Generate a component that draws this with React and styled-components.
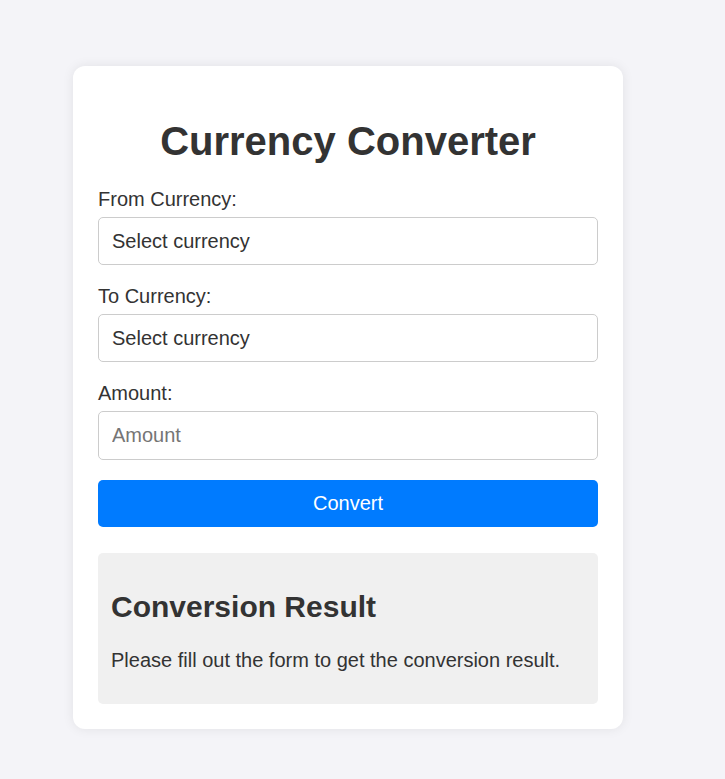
import styled, { createGlobalStyle } from "styled-components";

const GlobalStyle = createGlobalStyle`
  html, body {
    margin: 0;
    padding: 0;
    background: #f4f4f8;
  }
  body {
    font-family: "Liberation Sans", Arial, sans-serif;
    color: #333;
  }
`;

const Page = styled.div`
  min-height: 779px;
  padding: 66px 0 0 73px;
  box-sizing: border-box;
`;

const Card = styled.div`
  width: 550px;
  box-sizing: border-box;
  background: #fff;
  border-radius: 12px;
  padding: 25px;
  box-shadow: 0 0 12px rgba(0, 0, 0, 0.08);
`;

const Title = styled.h1`
  font-size: 40px;
  font-weight: bold;
  text-align: center;
  margin: 27px 0 24px;
  line-height: 46px;
  color: #333;
`;

const Field = styled.div`
  display: flex;
  flex-direction: column;
  gap: 6px;
  margin-bottom: ${(p) => (p.$last ? "0" : "20px")};
`;

const Label = styled.label`
  font-size: 20px;
  line-height: 23px;
  color: #333;
`;

const Select = styled.select`
  appearance: none;
  height: 48px;
  border: 1px solid #ccc;
  border-radius: 5px;
  padding: 0 13px;
  font-family: inherit;
  font-size: 20px;
  color: #333;
  background: #fff;
  outline: none;
`;

const Input = styled.input`
  height: 49px;
  box-sizing: border-box;
  border: 1px solid #ccc;
  border-radius: 5px;
  padding: 0 13px;
  font-family: inherit;
  font-size: 20px;
  color: #333;
  outline: none;

  &::placeholder {
    color: #757575;
  }
`;

const Button = styled.button`
  display: block;
  width: 100%;
  height: 47px;
  margin-top: 20px;
  border: none;
  border-radius: 5px;
  background: #007bff;
  color: #fff;
  font-family: inherit;
  font-size: 20px;
  cursor: pointer;
`;

const Result = styled.div`
  margin-top: 26px;
  background: #f0f0f0;
  border-radius: 5px;
  padding: 12px 13px;
  min-height: 151px;
  box-sizing: border-box;

  h2 {
    font-size: 30px;
    line-height: 34px;
    margin: 25px 0 25px;
    color: #333;
  }

  p {
    font-size: 20px;
    line-height: 23px;
    margin: 0 0 17px;
    color: #333;
  }
`;

function App() {
  return (
    <>
      <GlobalStyle />
      <Page>
        <Card>
          <Title>Currency Converter</Title>
          <Field>
            <Label htmlFor="from">From Currency:</Label>
            <Select id="from" defaultValue="">
              <option value="">Select currency</option>
            </Select>
          </Field>
          <Field>
            <Label htmlFor="to">To Currency:</Label>
            <Select id="to" defaultValue="">
              <option value="">Select currency</option>
            </Select>
          </Field>
          <Field $last>
            <Label htmlFor="amount">Amount:</Label>
            <Input id="amount" type="number" placeholder="Amount" />
          </Field>
          <Button>Convert</Button>
          <Result>
            <h2>Conversion Result</h2>
            <p>Please fill out the form to get the conversion result.</p>
          </Result>
        </Card>
      </Page>
    </>
  );
}

export default App;
